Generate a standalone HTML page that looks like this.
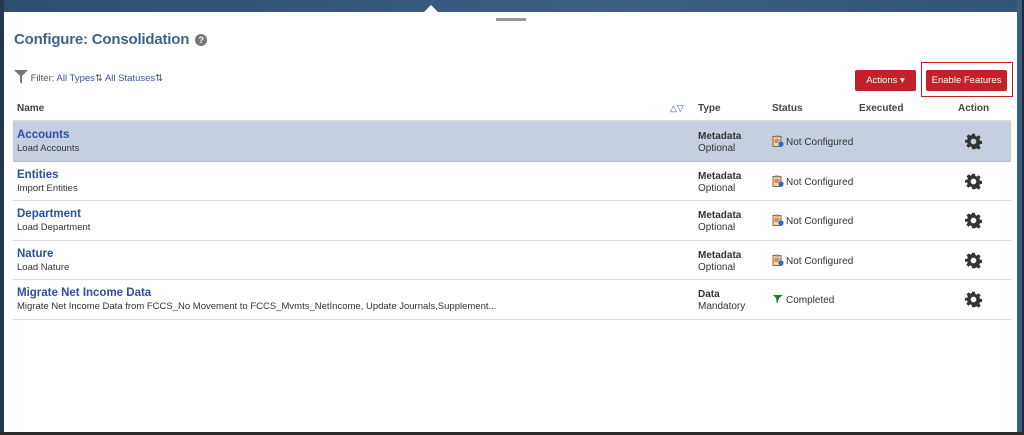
<!DOCTYPE html>
<html><head><style>
*{margin:0;padding:0;box-sizing:border-box}
body{width:1024px;height:435px;overflow:hidden;background:#fff;font-family:"Liberation Sans",Arial,sans-serif;position:relative}
.top{position:absolute;left:0;top:0;width:1024px;height:12px;background:linear-gradient(90deg,#2f4d70,#3e5f85 60%,#34557a)}
.lb{position:absolute;left:0;top:0;width:4px;height:435px;background:#24374f}
.rb{position:absolute;left:1017px;top:0;width:7px;height:435px;background:#3c5d84;border-right:2px solid #1c2a3a}
.bb{position:absolute;left:0;top:432px;width:1024px;height:3px;background:#2a2a2a}
.notch{position:absolute;left:424px;top:5px;width:0;height:0;border-left:7px solid transparent;border-right:7px solid transparent;border-bottom:7px solid #fff}
.handle{position:absolute;left:496px;top:18px;width:30px;height:3px;background:#999}
h1{position:absolute;left:14px;top:31px;font-size:15px;color:#3f6389;font-weight:bold;letter-spacing:-0.2px}
.q{display:inline-block;width:12px;height:12px;border-radius:50%;background:#777;color:#fff;font-size:9px;text-align:center;line-height:12px;vertical-align:1px;margin-left:2px}
.filter{position:absolute;left:14px;top:70px;font-size:9.5px;color:#555}
.filter a{color:#3a56a0}
.btn{position:absolute;top:70px;height:21px;background:#c4202a;color:#fff;font-size:9.5px;line-height:21px;text-align:center;border-radius:2px}
.hl{position:absolute;left:921px;top:62px;width:92px;height:35px;border:1.5px solid #c02020}
.th{position:absolute;top:103px;font-size:10px;font-weight:bold;color:#444}
.row{position:absolute;left:13px;width:998px;height:39.5px;border-bottom:1px solid #ddd}
.row.sel{background:#c5cfe0;border-bottom:1px solid #b8c2d4}
.n{position:absolute;left:4px;top:7px;font-size:11.5px;font-weight:bold;color:#2f4fa0}
.d{position:absolute;left:4px;top:21px;font-size:9.5px;color:#333}
.t{position:absolute;left:685px;top:9px;font-size:10px;color:#333;line-height:12px}
.s{position:absolute;left:759px;top:13px;font-size:10px;color:#333}
.s svg{vertical-align:-2px;margin-right:2px}
.g{position:absolute;left:952px;top:11px}
</style></head><body>
<div class="top"></div><div class="lb"></div><div class="rb"></div><div class="bb"></div>
<div class="notch"></div><div class="handle"></div>
<h1>Configure: Consolidation <span class="q">?</span></h1>
<div class="filter"><svg width="14" height="14" viewBox="0 0 14 14" style="vertical-align:-3px"><path d="M0 0H14L8 6V14L6 12V6Z" fill="#777"/></svg> Filter: <a>All Types</a>⇅ <a>All Statuses</a>⇅</div>
<div class="btn" style="left:855px;width:61px">Actions ▾</div>
<div class="btn" style="left:926px;width:81px">Enable Features</div>
<div class="hl"></div>
<div class="th" style="left:17px">Name</div>
<div class="th" style="left:670px;color:#3a56a0;font-weight:normal;font-size:9px">△▽</div>
<div class="th" style="left:698px">Type</div>
<div class="th" style="left:772px">Status</div>
<div class="th" style="left:859px">Executed</div>
<div class="th" style="left:958px">Action</div>
<div style="position:absolute;left:13px;top:120px;width:998px;height:2px;background:#d8d8d8"></div>
<svg width="0" height="0" style="position:absolute"><defs>
<symbol id="gear" viewBox="0 0 24 24"><path fill="#333" d="M10 1h4l.6 3.2 2 .9 2.7-1.9 2.8 2.8-1.9 2.7.9 2 3.2.6v4l-3.2.6-.9 2 1.9 2.7-2.8 2.8-2.7-1.9-2 .9L14 23h-4l-.6-3.2-2-.9-2.7 1.9-2.8-2.8 1.9-2.7-.9-2L0 14v-4l3.2-.6.9-2L2.2 4.7 5 1.9l2.7 1.9 2-.9zM12 8a4 4 0 100 8 4 4 0 000-8z"/></symbol>
<symbol id="clip" viewBox="0 0 12 12"><rect x="1" y="1.5" width="8" height="10" fill="#e8d9a8" stroke="#8a6a30" stroke-width="1"/><rect x="3" y="0.5" width="4" height="2" fill="#888"/><path d="M2.5 5h5M2.5 7h4" stroke="#c33" stroke-width="1"/><circle cx="9" cy="9" r="2.6" fill="#2a6ad0"/></symbol>
</defs></svg>
<div class="row sel" style="top:122px"><div class="n">Accounts</div><div class="d">Load Accounts</div><div class="t"><b>Metadata</b><br>Optional</div><div class="s"><svg width="12" height="12"><use href="#clip"/></svg>Not Configured</div><svg class="g" width="17" height="17"><use href="#gear"/></svg></div>
<div class="row" style="top:161.5px"><div class="n">Entities</div><div class="d">Import Entities</div><div class="t"><b>Metadata</b><br>Optional</div><div class="s"><svg width="12" height="12"><use href="#clip"/></svg>Not Configured</div><svg class="g" width="17" height="17"><use href="#gear"/></svg></div>
<div class="row" style="top:201px"><div class="n">Department</div><div class="d">Load Department</div><div class="t"><b>Metadata</b><br>Optional</div><div class="s"><svg width="12" height="12"><use href="#clip"/></svg>Not Configured</div><svg class="g" width="17" height="17"><use href="#gear"/></svg></div>
<div class="row" style="top:240.5px"><div class="n">Nature</div><div class="d">Load Nature</div><div class="t"><b>Metadata</b><br>Optional</div><div class="s"><svg width="12" height="12"><use href="#clip"/></svg>Not Configured</div><svg class="g" width="17" height="17"><use href="#gear"/></svg></div>
<div class="row" style="top:280px"><div class="n">Migrate Net Income Data</div><div class="d">Migrate Net Income Data from FCCS_No Movement to FCCS_Mvmts_NetIncome, Update Journals,Supplement...</div><div class="t"><b>Data</b><br>Mandatory</div><div class="s"><svg width="12" height="12" viewBox="0 0 12 12"><path d="M1 2L11 2 7 5 5 11 4 5Z" fill="#1a7a30"/></svg>Completed</div><svg class="g" width="17" height="17"><use href="#gear"/></svg></div>
</body></html>
